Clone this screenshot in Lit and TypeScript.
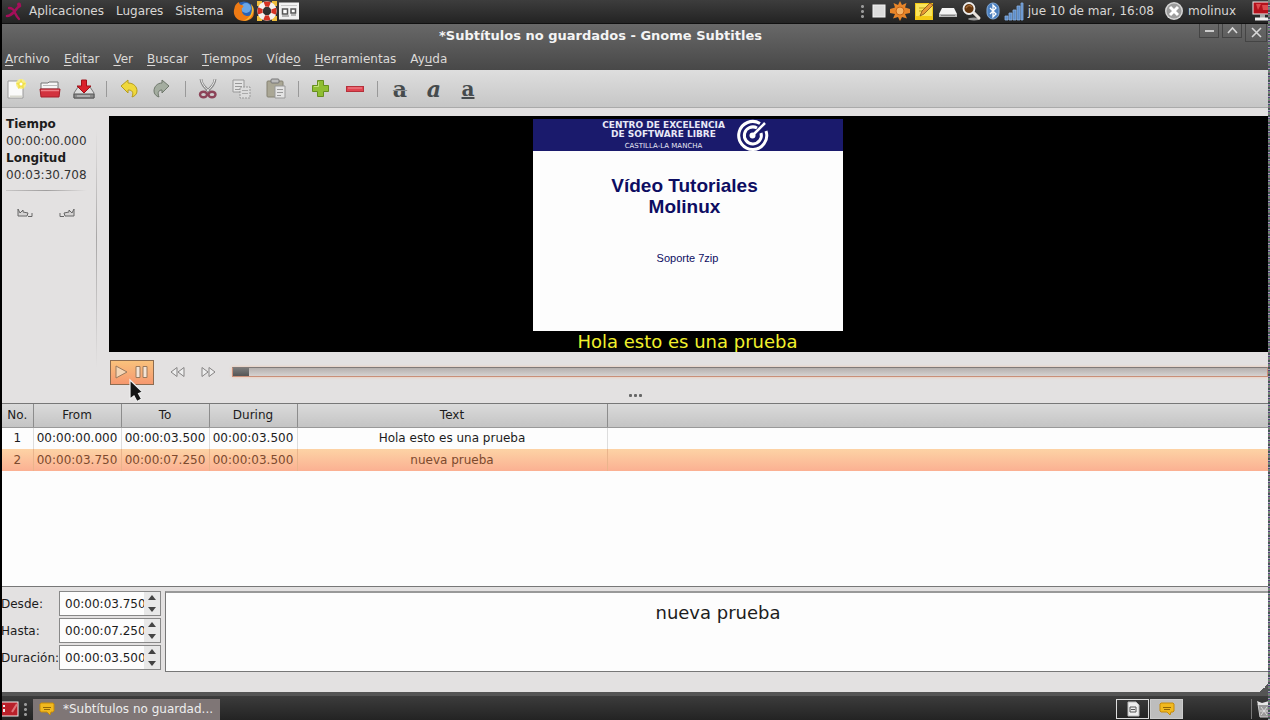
import { LitElement, html, css, svg, TemplateResult } from "lit";
import { customElement, state } from "lit/decorators.js";

type Icon = TemplateResult;
const icon = (w: number, h: number, body: unknown): Icon =>
  html`<svg width=${w} height=${h} viewBox="0 0 ${w} ${h}" aria-hidden="true">${body}</svg>`;

const I = {
  molinux: icon(18, 20, svg`<g fill="none" stroke="#a50f5a" stroke-linecap="round"><path d="M15 5c-3 1-4 4-6 6-2 2-5 4-7 4" stroke-width="2.600"/><path d="M4 7c4 0 5 2 6 5 1 2 2 4 4 6" stroke-width="2.400"/></g><circle cx="14" cy="3.500" r="2" fill="#a50f5a"/>`),
  firefox: icon(22, 22, svg`<circle cx="11" cy="11" r="9.500" fill="#2b63b5"/><circle cx="13" cy="8" r="5" fill="#6aa6e6"/><path d="M2 6C3 4 4 3 6 2c0 2 1 3 3 3 2 1 2 2 0 3-1 4 1 8 6 8 3 0 5-3 5-6 3 7-3 11-9 11C4 21 0 16 1 10z" fill="#ee7a14"/><path d="M18 4c3 3 4 7 1 11-1 3-5 6-9 6 6-2 11-8 8-17z" fill="#f9b72d"/>`),
  buoy: icon(22, 22, svg`<path d="M1 1h5v5H1zM16 1h5v5h-5zM1 16h5v5H1zM16 16h5v5h-5z" fill="#eebd3c"/><circle cx="11" cy="11" r="7" fill="none" stroke="#f6f1ee" stroke-width="5.500"/><circle cx="11" cy="11" r="7" fill="none" stroke="#d53223" stroke-width="5" stroke-dasharray="5.500 5.500" stroke-dashoffset="2.750"/>`),
  windowIcon: icon(20, 18, svg`<rect width="20" height="17" y="0.500" fill="#f1f1f1"/><path d="M2 3.500h16" stroke="#c8c8c8"/><path d="M3.500 7h5v5h-5zM12 7h4.500v4H12z" fill="#fff" stroke="#555" stroke-width="1.500"/><path d="M3 14h7M12 13h5" stroke="#777"/>`),
  square: icon(14, 14, svg`<rect x="1" y="1" width="12" height="12" fill="#dcdcdc" stroke="#f2f2f2"/>`),
  sun: icon(20, 20, svg`<path d="M10 0l2 4 4.500-2-1.500 4.500 5 1.500v4l-5 1 2 4.500-5-1.500-2 4-2-4-5 1.500 2-4.500-5-1V8l5-1.500L3.500 2 8 4z" fill="#e8862a"/><circle cx="10" cy="10" r="4" fill="#f5b264" stroke="#c96312"/>`),
  note: icon(20, 20, svg`<rect x="1" y="2" width="18" height="17" fill="#f3c916"/><rect x="2" y="3" width="16" height="12" fill="#fae45b"/><path d="M5 7h8M5 10h5" stroke="#bd9b18"/><path d="M6 15l2-5 8-8 3 2-9 9z" fill="#e99a35" stroke="#7d4c18" stroke-width=".8"/>`),
  drive: icon(20, 20, svg`<path d="M4 7h12l3 6H1z" fill="#f4f4f4"/><path d="M1 13h18v3H1z" fill="#bcbcbc"/><path d="M3 14.500h14" stroke="#888"/>`),
  magnifier: icon(20, 20, svg`<ellipse cx="12" cy="18" rx="6" ry="1.500" fill="#999"/><path d="M11 11l6 6" stroke="#e8e2dc" stroke-width="3" stroke-linecap="round"/><circle cx="7" cy="7.500" r="5.500" fill="#65370f" stroke="#eee" stroke-width="1.800"/><path d="M4 7c2-3 4-3 6-1" stroke="#a36c3b" stroke-width="1.500" fill="none"/>`),
  bluetooth: icon(14, 18, svg`<rect x="1" y="1" width="12" height="16" rx="6" fill="#4b80c0" stroke="#83abd9"/><path d="M4 6l6 6-3 3V3l3 3-6 6" fill="none" stroke="#fff" stroke-width="1.300"/>`),
  signal: icon(20, 20, svg`<path d="M1 15h3v4H1zM5 12h3v7H5zM9 9h3v10H9zM13 5h3v14h-3zM17 2h2v17h-2z" fill="#5d8dc9" stroke="#88b0e2" stroke-width=".8"/>`),
  close: icon(20, 20, svg`<circle cx="10" cy="10" r="9" fill="#d6d6d6"/><circle cx="10" cy="10" r="7.500" fill="#9d9d9d"/><path d="M6 6l8 8M14 6l-8 8" stroke="#fff" stroke-width="3"/>`),
  monitor: icon(18, 20, svg`<rect x="1" y="1" width="17" height="12" fill="#b5121c" stroke="#eee"/><path d="M4 3h5l-3 6zM10 4h6v5h-5z" fill="#dd4a4d"/><path d="M8 13h5v4H8z" fill="#aaa"/><path d="M3 18h14" stroke="#f0f0f0" stroke-width="3"/>`),
  fileNew: icon(22, 22, svg`<path d="M3 3h15v17H3z" fill="#fafafa" stroke="#9a9a9a"/><path d="M5 18.500h12" stroke="#d9d9cf" stroke-width="2"/><circle cx="16" cy="6" r="5" fill="#f8ef8a"/><path d="M16 1l1.500 3.500 3.500.5-2.500 2.500.5 3.500-3-2-3 2 .5-3.500L11 5l3.500-.5z" fill="#f2e04a"/><circle cx="16" cy="6" r="1.500" fill="#fff"/>`),
  open: icon(22, 22, svg`<path d="M2 5h7l1-1h9v7H2z" fill="#f5f5f5" stroke="#777"/><path d="M4 7.500h14" stroke="#bbb"/><path d="M1 11h20l-1 8H2z" fill="#d2333f" stroke="#a51f2a"/><path d="M2 12.500h18" stroke="#ef8087" stroke-width="1.500"/>`),
  save: icon(22, 22, svg`<path d="M5 9h12l4 6v5H1v-5z" fill="#dedede" stroke="#777"/><path d="M1 16h20v4H1z" fill="#8c8c8c" stroke="#555"/><path d="M4 18h13" stroke="#ccc"/><path d="M8.500 2h5v6H18l-7 7-7-7h4.500z" fill="#d9202a" stroke="#a01018"/>`),
  undo: icon(22, 22, svg`<path d="M3 8l7-6v3c6 0 9 4 9 8 0 3-2 5-5 6 2-5 0-7-4-7v3z" fill="#efd83c" stroke="#b59c1c"/>`),
  redo: icon(22, 22, svg`<path d="M17 8l-7-6v3C5 5 2 9 2 13c0 3 2 5 5 6-2-5 0-7 3-7v3z" fill="#a4ada0" stroke="#6e776b"/>`),
  cut: icon(22, 22, svg`<path d="M4 1c0 5 4 9 9 13M18 1c0 5-4 9-9 13" stroke="#888" stroke-width="2.800" fill="none"/><path d="M4 1c1 5 4 9 9 13M18 1c-1 5-4 9-9 13" stroke="#eee" fill="none"/><g fill="none" stroke="#8c4358" stroke-width="2.400"><ellipse cx="6.500" cy="16.500" rx="3.500" ry="2.800"/><ellipse cx="15" cy="16.500" rx="3.500" ry="2.800"/></g>`),
  copy: icon(22, 22, svg`<path d="M2 2h11v12H2z" fill="#e3e3e3" stroke="#999"/><path d="M4 5.500h7M4 8.500h7M4 11.500h5" stroke="#999"/><path d="M9 9h10v11H9z" fill="#dcdcdc" stroke="#999" stroke-dasharray="2 1"/><path d="M11 12.500h6M11 15.500h6" stroke="#aaa"/>`),
  paste: icon(22, 22, svg`<rect x="2" y="3" width="16" height="16" rx="1" fill="#aaa795" stroke="#858273"/><rect x="6" y="1" width="8" height="4" rx="1" fill="#bbb" stroke="#777"/><path d="M10 8h10v12H10z" fill="#e4e4e4" stroke="#999"/><path d="M12 11.500h6M12 14.500h6M12 17.500h4" stroke="#999"/>`),
  add: icon(22, 22, svg`<path d="M7.500 2.500h6v5h5v6h-5v5h-6v-5h-5v-6h5z" fill="#8fbe33" stroke="#668f1f"/><path d="M8.500 4v4.500H4" stroke="#c3e07c" fill="none"/>`),
  remove: icon(22, 22, svg`<rect x="2.500" y="8.500" width="17" height="5" fill="#e04450" stroke="#b5303a"/><path d="M4 10h14" stroke="#f28d94"/>`),
  back: icon(16, 10, svg`<path d="M1 1v7h9l1-3-5-1V2L3 5z" fill="#d5d3d3" stroke="#666"/><path d="M11 8.500h4V5" stroke="#666" fill="none"/>`),
  forward: icon(16, 10, svg`<path d="M15 1v7H6L5 5l5-1V2l3 3z" fill="#d5d3d3" stroke="#666"/><path d="M5 8.500H1V5" stroke="#666" fill="none"/>`),
  play: icon(36, 16, svg`<path d="M2 2l11 6-11 6z" fill="#f4d6b6" stroke="#98795d"/><path d="M22 2.500h4v11h-4zM29 2.500h4v11h-4z" fill="#f4e4d6" stroke="#98795d"/>`),
  rewind: icon(16, 12, svg`<path d="M7 1.500v9L1 6zM14 1.500v9L8 6z" fill="#eee" stroke="#858383"/>`),
  fast: icon(16, 12, svg`<path d="M2 1.500v9L8 6zM9 1.500v9l6-4.500z" fill="#eee" stroke="#858383"/>`),
  cursor: icon(18, 26, svg`<path d="M2 2l12.500 12-4 1.500 3 5.500-4.500 2.500-3-5.500-4 3z" fill="#151515" stroke="#eee" stroke-width="1.200"/>`),
  target: icon(32, 32, svg`<g fill="none" stroke="#fff"><path d="M23 4.500A14 14 0 1 0 29 12" stroke-width="3"/><path d="M20 9A8.500 8.500 0 1 0 24 14" stroke-width="3"/><path d="M15 17L28 4" stroke-width="2.500"/></g><circle cx="15.500" cy="16.500" r="3" fill="#fff"/>`),
  bubble: icon(16, 14, svg`<path d="M2 1h12l1 1v7l-1 1h-2l-1 3-3-3H2L1 9V2z" fill="#f1b91f" stroke="#c58a0b"/><path d="M4 5.500h8M5 7.500h6" stroke="#8f6508"/>`),
  desktop: icon(20, 16, svg`<rect x="0" y="1" width="18" height="14" fill="#b9202a" stroke="#eee"/><path d="M3 4h2v2H3zM3 8h2v3H3z" fill="#eee"/><path d="M12 11l5-8" stroke="#df7379" stroke-width="2"/>`),
  doc: icon(14, 16, svg`<path d="M2 1h8l3 3v11H2z" fill="#eee" stroke="#bbb"/><path d="M4 6h6v5H4zM5 8.500h4" stroke="#555" fill="none"/>`),
  trash: icon(14, 18, svg`<path d="M2 4h12l-1 13H4z" fill="#999" stroke="#ccc"/><path d="M1 1l5 2 7-2v4H2z" fill="#e6e6e6"/><path d="M5 7l6 8M11 7l-6 8M4 11h9" stroke="#ddd"/>`),
  min: icon(11, 11, svg`<path d="M1 6h9" stroke="#d8d8d8" stroke-width="1.800"/>`),
  max: icon(11, 11, svg`<path d="M1 8l4.500-5L10 8" fill="none" stroke="#d8d8d8" stroke-width="1.600"/>`),
  x: icon(11, 11, svg`<path d="M1 1l9 9M10 1l-9 9" stroke="#d8d8d8" stroke-width="1.600"/>`),
};

@customElement("app-root")
export class AppRoot extends LitElement {
  @state() private rows = [
    { from: "00:00:00.000", to: "00:00:03.500", during: "00:00:03.500", text: "Hola esto es una prueba" },
    { from: "00:00:03.750", to: "00:00:07.250", during: "00:00:03.500", text: "nueva prueba" },
  ];
  @state() private selected = 1;

  static styles = css`
    :host {
      display: flex; flex-direction: column; position: relative; height: 100vh; overflow: hidden;
      font: 12px/16px "DejaVu Sans", sans-serif; color: #1c1c1c; background: #e3e1e1;
    }
    :host::before, :host::after { content: ""; position: absolute; top: 0; bottom: 0; width: 2px; z-index: 5; }
    :host::before { left: 0; background: #000; }
    :host::after {
      right: 0;
      background: repeating-linear-gradient(#6c8a72 0 2px, #8d5f87 2px 3px, #405a52 3px 5px, #a9a3b4 5px 6px, #54417c 6px 7px);
    }
    * { box-sizing: border-box; }
    svg { display: block; flex: none; }
    button, input, textarea { font: inherit; color: inherit; margin: 0; padding: 0; border: 0; background: none; }
    a { color: inherit; text-decoration: none; }
    h1, h2, p, dl, dd, dt { margin: 0; font-size: inherit; }

    .panel { display: flex; align-items: center; height: 24px; padding: 0 0 2px 5px; color: #d9d7d5; background: linear-gradient(#3d3d3d, #232323); flex: none; border-bottom: 1px solid #111; }
    .panel nav { display: flex; gap: 12px; margin: 0 9px 0 6px; }
    .launch { display: flex; gap: 1px; align-items: center; }
    .tray { display: flex; align-items: center; gap: 4px; margin-left: auto; }
    .dots { width: 3px; height: 14px; background: radial-gradient(circle, #999 1px, transparent 2px) 0 0 / 3px 5px; }
    .tray .dots { margin-right: 4px; }
    .tray .clock { margin-right: 6px; }
    .tray .user { margin-right: 12px; }

    .head { background: linear-gradient(#686868, #484848); color: #dcdad8; flex: none; }
    .title { display: flex; align-items: start; height: 24px; padding-left: 2px; }
    .title h1 { flex: 1; text-align: center; color: #f4f4f4; padding-top: 4px; font-size: 13px; }
    .title button { display: grid; place-items: center; width: 20px; height: 14px; border: 1px solid #444; border-top: 0; }
    .wins { display: flex; gap: 3px; width: 71px; }
    .title .wins button:last-child { width: 22px; height: 18px; }
    .menu { display: flex; gap: 14px; padding: 3px 5px; }
    .menu u { text-underline-offset: 2px; }

    .tools { display: flex; align-items: center; height: 38px; padding: 0 5px; gap: 11px; flex: none; background: linear-gradient(#dedede, #c6c6c6); border-bottom: 1px solid #aaa; }
    .tools div { display: flex; gap: 12px; }
    .tools button { display: grid; place-items: center; width: 22px; height: 26px; }
    .tools i { width: 1px; height: 16px; background: #999; }
    .tools .glyph { font: bold 22px/22px "DejaVu Serif", serif; color: #464b4d; }
    .tools .strike { text-decoration: line-through #8a8d8e 1px; }
    .tools .italic { font-style: italic; }
    .tools .under { font-size: 20px; text-decoration: underline 2px; }

    .upper { display: grid; grid-template: 1fr 12px / 97px 1fr; height: 296px; flex: none; border-bottom: 1px solid #777; }
    .side { padding: 8px 10px 0 6px; background: linear-gradient(transparent 8%, #a9a7a7 50%, transparent) right / 1px 100% no-repeat; margin-bottom: 24px; }
    .side dl { line-height: 17px; padding-bottom: 7px; background: linear-gradient(90deg, #c8c6c6, #a09e9e 50%, transparent) bottom / 100% 1px no-repeat; }
    .side dt { font-weight: bold; }
    .side dd { color: #333; }
    .side div { display: flex; gap: 26px; padding: 17px 0 0 11px; }
    .media { display: flex; flex-direction: column; padding: 8px 2px 0 12px; min-width: 0; }
    .screen { display: flex; flex-direction: column; align-items: center; height: 236px; padding: 3px 2px 0 0; background: #000; flex: none; }
    .slide { width: 310px; height: 212px; background: #fdfdfd; color: #0d0d62; text-align: center; font-family: "Liberation Sans", sans-serif; }
    .banner { display: flex; justify-content: center; gap: 12px; height: 32px; padding-right: 4px; background: #1a1a6c; color: #e8e8f6; }
    .banner p { font: bold 9px/9px "DejaVu Sans", sans-serif; padding-top: 2px; }
    .banner small { display: block; font-size: 7px; line-height: 9px; padding-top: 3px; font-weight: normal; }
    .slide h2 { font-size: 19px; line-height: 21px; padding: 24px 6px 0 0; }
    .slide .sub { font-size: 11px; line-height: 14px; padding-top: 34px; }
    .caption { color: #f1f12c; font-size: 18px; line-height: 21px; }
    .controls { display: flex; align-items: center; height: 40px; padding-left: 1px; flex: none; }
    .playbtn { display: grid; place-items: center; width: 44px; height: 25px; border: 1px solid #8d6c50; background: linear-gradient(#f9c27c, #f6986f); position: relative; }
    .playbtn .cursor { position: absolute; left: 17px; top: 17px; z-index: 2; }
    .seek { margin-left: 16px; }
    .seek + .seek { margin: 0 16px 0 14px; }
    .slider { appearance: none; flex: 1; min-width: 0; height: 10px; border: 1px solid #c98f78; border-top: 1px solid #807a78; background: linear-gradient(#b5b0ae, #d6d2d0); box-shadow: 0 0 3px #f0c4a8; }
    .slider::-webkit-slider-thumb { appearance: none; width: 16px; height: 8px; background: linear-gradient(#7a7a7a, #555); }
    .grip { grid-column: 1 / -1; display: flex; gap: 2px; justify-content: center; padding-top: 2px; }
    .grip b { width: 3px; height: 3px; border-radius: 1px; background: #666; }

    .list { flex: 1; background: #fdfdfd; min-height: 0; border-bottom: 1px solid #777; }
    table { width: 100%; border-collapse: collapse; table-layout: fixed; text-align: center; }
    th, td { padding: 0; font-weight: normal; white-space: nowrap; }
    th { height: 23px; background: linear-gradient(#dadada, #c4c4c4); border-right: 1px solid #8c8c8c; border-bottom: 1px solid #999; }
    td { height: 22px; border-right: 1px solid #ddd; }
    th:last-child, td:last-child { border-right: 0; }
    th:first-child, td:first-child { padding-left: 2px; }
    .n { width: 33px; } .t { width: 88px; } .x { width: 310px; }
    .on { color: #7d4a2e; background: linear-gradient(#fdd3a5, #fbb092); }
    .on td { border-right-color: #eab48c; }

    .edit { display: flex; height: 105px; flex: none; padding-top: 4px; align-items: start; background: linear-gradient(135deg, transparent 50%, #555 50%) right bottom / 10px 10px no-repeat; }
    .times { display: grid; grid-template-columns: 58px 102px; row-gap: 2px; align-items: center; width: 165px; padding-left: 1px; }
    .spin { display: flex; height: 25px; border: 1px solid #888; background: #fdfdfd; }
    .spin input { flex: 1; min-width: 0; padding-left: 5px; }
    .spin span { display: grid; width: 16px; background: #e8e8e8; place-items: center; }
    .spin button { width: 16px; height: 11px; display: grid; place-items: center; }
    .up, .down { border: 4px solid transparent; width: 0; height: 0; }
    .up { border-top: 0; border-bottom: 5px solid #444; } .down { border-bottom: 0; border-top: 5px solid #444; }
    textarea { flex: 1; height: 81px; border: 1px solid #777; border-top: 2px solid #999; border-right: 0; background: #fdfdfd; resize: none; text-align: center; font-size: 18px; line-height: 22px; padding-top: 9px; outline: 0; overflow: hidden; }
    .bar { height: 28px; flex: none; display: flex; align-items: center; border-top: 4px solid #555; background: linear-gradient(#3c3c3c, #232323); color: #dedcda; padding-top: 2px; }
    .bar .dots { margin: 0 6px 0 4px; }
    .task { display: flex; align-items: center; gap: 8px; width: 187px; height: 21px; padding: 0 6px; background: #7f7676; color: #eee; }
    .desks { display: flex; margin-left: auto; height: 20px; border-right: 1px solid #777; margin-right: 4px; width: 136px; }
    .desks button { width: 33px; display: grid; place-items: center; border: 1px solid #ddd; }
    .desks button + button { background: #bdbdbd; border-color: #ccc; margin-left: 1px; }
  `;

  private spin(id: string, label: string, value: string) {
    return html`<label for=${id}>${label}</label>
      <div class="spin"><input id=${id} .value=${value} /><span>
        <button aria-label="${label} +"><b class="up"></b></button>
        <button aria-label="${label} −"><b class="down"></b></button></span></div>`;
  }

  render() {
    const cur = this.rows[this.selected];
    return html`
      <header class="panel">
        ${I.molinux}
        <nav><a href="#">Aplicaciones</a><a href="#">Lugares</a><a href="#">Sistema</a></nav>
        <div class="launch">${I.firefox}${I.buoy}${I.windowIcon}</div>
        <div class="tray"><span class="dots"></span>${I.square}${I.sun}${I.note}${I.drive}${I.magnifier}${I.bluetooth}${I.signal}
          <span class="clock">jue 10 de mar, 16:08</span>${I.close}<span class="user">molinux</span>${I.monitor}</div>
      </header>
      <div class="head">
        <div class="title"><h1>*Subtítulos no guardados - Gnome Subtitles</h1>
          <div class="wins"><button aria-label="Minimizar">${I.min}</button><button aria-label="Maximizar">${I.max}</button><button aria-label="Cerrar">${I.x}</button></div></div>
        <nav class="menu"><a href="#"><u>A</u>rchivo</a><a href="#"><u>E</u>ditar</a><a href="#"><u>V</u>er</a><a href="#"><u>B</u>uscar</a><a href="#"><u>T</u>iempos</a><a href="#">Víde<u>o</u></a><a href="#"><u>H</u>erramientas</a><a href="#">Ay<u>u</u>da</a></nav>
      </div>
      <div class="tools">
        <div><button aria-label="Nuevo">${I.fileNew}</button><button aria-label="Abrir">${I.open}</button><button aria-label="Guardar">${I.save}</button></div><i></i>
        <div><button aria-label="Deshacer">${I.undo}</button><button aria-label="Rehacer">${I.redo}</button></div><i></i>
        <div><button aria-label="Cortar">${I.cut}</button><button aria-label="Copiar">${I.copy}</button><button aria-label="Pegar">${I.paste}</button></div><i></i>
        <div><button aria-label="Insertar">${I.add}</button><button aria-label="Eliminar">${I.remove}</button></div><i></i>
        <div><button class="glyph strike" aria-label="Negrita">a</button><button class="glyph italic" aria-label="Cursiva">a</button><button class="glyph under" aria-label="Subrayado">a</button></div>
      </div>
      <main class="upper">
        <section class="side">
          <dl><dt>Tiempo</dt><dd>00:00:00.000</dd><dt>Longitud</dt><dd>00:03:30.708</dd></dl>
          <div><button aria-label="Fijar inicio">${I.back}</button><button aria-label="Fijar final">${I.forward}</button></div>
        </section>
        <section class="media">
          <div class="screen">
            <div class="slide">
              <div class="banner"><p>CENTRO DE EXCELENCIA<br />DE SOFTWARE LIBRE<small>CASTILLA-LA MANCHA</small></p>${I.target}</div>
              <h2>Vídeo Tutoriales<br />Molinux</h2>
              <p class="sub">Soporte 7zip</p>
            </div>
            <p class="caption">Hola esto es una prueba</p>
          </div>
          <div class="controls">
            <button class="playbtn" aria-label="Reproducir o pausar">${I.play}<span class="cursor">${I.cursor}</span></button>
            <button class="seek" aria-label="Retroceder">${I.rewind}</button><button class="seek" aria-label="Avanzar">${I.fast}</button>
            <input class="slider" type="range" aria-label="Posición" min="0" max="210" .value=${"0"} />
          </div>
        </section>
        <div class="grip"><b></b><b></b><b></b></div>
      </main>
      <section class="list">
        <table>
          <thead><tr><th class="n">No.</th><th class="t">From</th><th class="t">To</th><th class="t">During</th><th class="x">Text</th><th></th></tr></thead>
          <tbody>${this.rows.map((r, i) => html`<tr class=${i === this.selected ? "on" : ""} @click=${() => (this.selected = i)}>
            <td>${i + 1}</td><td>${r.from}</td><td>${r.to}</td><td>${r.during}</td><td>${r.text}</td><td></td></tr>`)}</tbody>
        </table>
      </section>
      <section class="edit">
        <div class="times">${this.spin("from", "Desde:", cur.from)}${this.spin("to", "Hasta:", cur.to)}${this.spin("dur", "Duración:", cur.during)}</div>
        <textarea aria-label="Texto" .value=${cur.text}></textarea>
      </section>
      <footer class="bar">${I.desktop}<span class="dots"></span>
        <button class="task">${I.bubble}<span>*Subtítulos no guardad...</span></button>
        <div class="desks"><button aria-label="Escritorio 1">${I.doc}</button><button aria-label="Escritorio 2">${I.bubble}</button></div>${I.trash}
      </footer>`;
  }
}
